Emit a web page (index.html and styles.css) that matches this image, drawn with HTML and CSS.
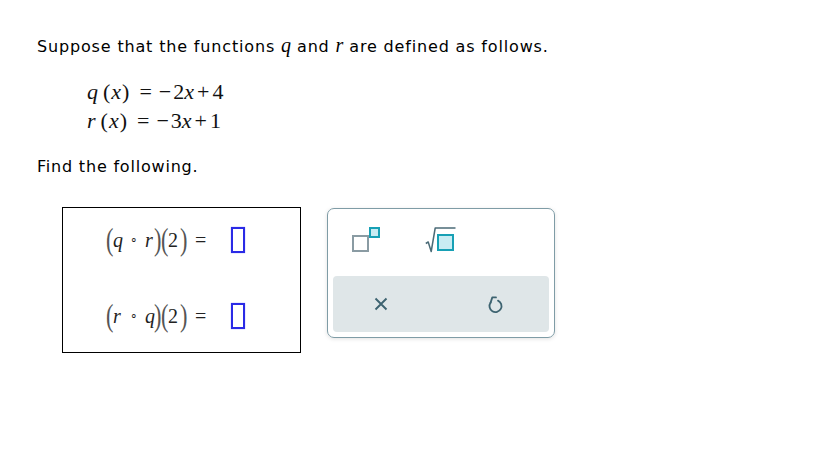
FILE: index.html
```html
<!DOCTYPE html>
<html>
<head>
<meta charset="utf-8">
<link rel="stylesheet" href="styles.css">
</head>
<body>
<div class="page">
  <p class="intro">Suppose that the functions <span class="mvar">q</span> and <span class="mvar">r</span> are defined as follows.</p>
  <div class="defs">
    <div class="def"><i>q</i><span class="p lp">(</span><i>x</i><span class="p">)</span><span class="eq">=</span><span class="minus">−</span>2<i>x</i><span class="op">+</span>4</div>
    <div class="def"><i>r</i><span class="p lp">(</span><i>x</i><span class="p">)</span><span class="eq">=</span><span class="minus">−</span>3<i>x</i><span class="op">+</span>1</div>
  </div>
  <p class="find">Find the following.</p>
  <div class="work">
    <div class="answers">
      <div class="row">
        <span class="big">(</span><i>q</i><span class="comp">∘</span><i>r</i><span class="big">)</span><span class="big">(</span><span class="num">2</span><span class="big">)</span><span class="req">=</span><span class="blank"></span>
      </div>
      <div class="row">
        <span class="big">(</span><i>r</i><span class="comp">∘</span><i>q</i><span class="big">)</span><span class="big">(</span><span class="num">2</span><span class="big">)</span><span class="req">=</span><span class="blank"></span>
      </div>
    </div>
    <div class="keypad">
      <div class="tools">
        <div class="tool sup" role="button" aria-label="superscript">
          <svg width="29" height="26" viewBox="0 0 29 26"><rect x="1" y="9" width="15" height="15" fill="none" stroke="#8a9ba3" stroke-width="2"/><rect x="18" y="1" width="9" height="9" fill="#c8ecf3" stroke="#17a0b5" stroke-width="2"/></svg>
        </div>
        <div class="tool sqrt" role="button" aria-label="square root">
          <svg width="31" height="26" viewBox="0 0 31 26"><path d="M0.8 16.5 L3.2 15 L6.2 24.5 L10.2 1 L30.5 1" fill="none" stroke="#4b6b77" stroke-width="1.5" stroke-linejoin="round"/><rect x="13" y="8" width="15" height="15" fill="#c8ecf3" stroke="#17a0b5" stroke-width="2"/></svg>
        </div>
      </div>
      <div class="actions">
        <div class="act" role="button" aria-label="clear">
          <svg width="14" height="14" viewBox="0 0 14 14"><path d="M1.5 1.5 L12.5 12.5 M12.5 1.5 L1.5 12.5" stroke="#3d6370" stroke-width="1.9" fill="none"/></svg>
        </div>
        <div class="act" role="button" aria-label="undo">
          <svg width="18" height="20" viewBox="0 0 18 20"><path d="M4.6 8.6 A6 6 0 1 0 12 6.6" fill="none" stroke="#3d6370" stroke-width="1.8" stroke-linecap="round"/><path d="M10 3.4 H6.3 L4.6 8.6" fill="none" stroke="#3d6370" stroke-width="1.8" stroke-linecap="round" stroke-linejoin="round"/></svg>
        </div>
      </div>
    </div>
  </div>
</div>
</body>
</html>
```

FILE: styles.css
```css
* { box-sizing: border-box; }
body {
  margin: 0;
  background: #fff;
  font-family: "DejaVu Sans", Verdana, sans-serif;
  color: #000;
}
.page {
  padding: 34px 0 0 37px;
}
.intro {
  margin: 0;
  font-size: 16px;
  letter-spacing: 0.84px;
  line-height: 22px;
}
.mvar {
  font-family: "Liberation Serif", "Times New Roman", serif;
  font-style: italic;
  font-size: 20px;
  letter-spacing: 0;
}
.defs {
  margin: 19px 0 0 50px;
  font-family: "Liberation Serif", "Times New Roman", serif;
  font-size: 22px;
  line-height: 29px;
  color: #111;
}
.def { display: flex; align-items: baseline; }
.def .lp { margin-left: 4px; }
.def .p { padding: 0 1px; }
.def .eq { margin: 0 7px 0 9px; font-size: 22px; }
.def .minus { margin-right: 2px; }
.def .op { margin: 0 3px; }
.find {
  margin: 21px 0 0 0;
  font-size: 16px;
  letter-spacing: 0.8px;
  line-height: 22px;
}
.work {
  display: flex;
  align-items: flex-start;
  margin: 29px 0 0 25px;
  gap: 26px;
}
.answers {
  width: 239px;
  height: 146px;
  border: 1px solid #000;
  display: flex;
  flex-direction: column;
  align-items: flex-start;
  padding: 18px 0 0 42px;
  gap: 48px;
}
.row {
  display: flex;
  align-items: center;
  height: 28px;
  font-family: "Liberation Serif", "Times New Roman", serif;
  font-size: 20px;
  color: #222;
}
.row i { display: inline-block; width: 8px; }
.row .big {
  font-size: 31px;
  color: #555;
  display: inline-block;
  transform: scaleX(0.72);
  width: 7px;
  text-align: center;
  line-height: 28px;
}
.row .big + i { margin-left: 1px; }
.row .num { margin: 0 1px; }
.row .comp {
  font-size: 12px;
  margin: 0 7px 0 9px;
}
.row .req {
  margin: 0 25px 0 9px;
  font-size: 20px;
}
.blank {
  width: 14px;
  height: 26px;
  border: 2px solid #2a2ae6;
  box-shadow: 0 0 1px #8b8bff;
}
.keypad {
  width: 228px;
  height: 130px;
  margin-top: 1px;
  border: 1px solid #7f9ca6;
  border-radius: 7px;
  box-shadow: 0 1px 4px rgba(0,0,0,0.12);
  display: flex;
  flex-direction: column;
  padding: 0 5px 5px;
}
.tools {
  display: flex;
  height: 67px;
  align-items: center;
  padding: 0 0 5px 19px;
  gap: 44px;
}
.tool {
  display: flex;
  align-items: center;
  justify-content: center;
}
.actions {
  flex: 1;
  background: #dfe6e8;
  border-radius: 4px;
  display: grid;
  grid-template-columns: 1fr 1fr;
}
.act {
  display: flex;
  align-items: center;
  justify-content: center;
}
.act:first-child { padding-right: 12px; }
```
